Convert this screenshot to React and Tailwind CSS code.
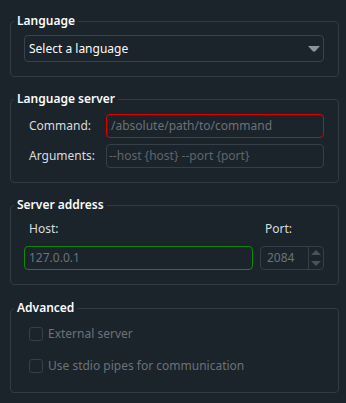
import React from "react";

const Group = ({ title, children }) => (
  <fieldset className="border border-[#313b45] rounded-[4px] px-[3px] pb-[14px] min-w-0">
    <legend className="px-[3px] text-[12px] leading-[18px] font-semibold text-[#fcfcfc]">{title}</legend>
    <div className="ml-[10px] mr-[11px]">{children}</div>
  </fieldset>
);

const Check = ({ label }) => (
  <div className="h-[24px] flex items-center pl-[5px] gap-[5px]">
    <span className="w-[14px] h-[14px] rounded-[3px] border border-[#353f49]" />
    <span className="text-[#6b7278]">{label}</span>
  </div>
);

export default function App() {
  return (
    <div
      className="w-[346px] h-[403px] bg-[#1b232b] pl-[10px] pr-[7px] pt-[12px] text-[12px] leading-[18px] overflow-hidden"
      style={{ fontFamily: '"Noto Sans", sans-serif' }}
    >
      <Group title="Language">
        {/* combo box */}
        <div className="mt-[5px] h-[27px] rounded-[4px] border border-[#38434e] flex items-center justify-between pl-[4px] pr-[2px]">
          <span className="text-[#fcfcfc]">Select a language</span>
          <svg width="12" height="6" viewBox="0 0 12 6" className="mr-[1px]">
            <polygon points="0,0 12,0 7,5.5 5,5.5" fill="#8e9499" />
          </svg>
        </div>
      </Group>

      <div className="mt-[13px]">
        <Group title="Language server">
          <div className="mt-[6px] flex flex-col gap-[6px]">
            <div className="flex items-center">
              <span className="w-[82px] pl-[5px] text-[#d9dcdf]">Command:</span>
              <div className="flex-1 h-[24px] rounded-[4px] border border-[#e00000] flex items-center pl-[4px] text-[#6b7278]">
                /absolute/path/to/command
              </div>
            </div>
            <div className="flex items-center">
              <span className="w-[82px] pl-[5px] text-[#d9dcdf]">Arguments:</span>
              <div className="flex-1 h-[24px] rounded-[4px] border border-[#353f49] flex items-center pl-[2px] text-[#5f666c]">
                --host {"{host}"} --port {"{port}"}
              </div>
            </div>
          </div>
        </Group>
      </div>

      <div className="mt-[13px]">
        <Group title="Server address">
          <div className="mt-[6px] flex gap-[7px]">
            <div className="flex-1 flex flex-col gap-[8px]">
              <span className="pl-[5px] text-[#d9dcdf]">Host:</span>
              <div className="h-[24px] rounded-[4px] border border-[#0f8a0f] flex items-center pl-[4px] text-[#6b7278]">
                127.0.0.1
              </div>
            </div>
            <div className="w-[64px] flex flex-col gap-[8px]">
              <span className="pl-[5px] text-[#d9dcdf]">Port:</span>
              <div className="h-[24px] rounded-[4px] border border-[#353f49] flex items-center">
                <span className="flex-1 pl-[6px] text-[#6b7278]">2084</span>
                <div className="w-[15px] h-full border-l border-[#353f49] flex flex-col items-center justify-center gap-[6px]">
                  <svg width="10" height="5" viewBox="0 0 10 5">
                    <polygon points="0,5 10,5 5,0" fill="#4a5259" />
                  </svg>
                  <svg width="10" height="5" viewBox="0 0 10 5">
                    <polygon points="0,0 10,0 5,5" fill="#4a5259" />
                  </svg>
                </div>
              </div>
            </div>
          </div>
        </Group>
      </div>

      <div className="mt-[14px]">
        <Group title="Advanced">
          <div className="mt-[5px] flex flex-col gap-[8px]">
            <Check label="External server" />
            <Check label="Use stdio pipes for communication" />
          </div>
        </Group>
      </div>
    </div>
  );
}
